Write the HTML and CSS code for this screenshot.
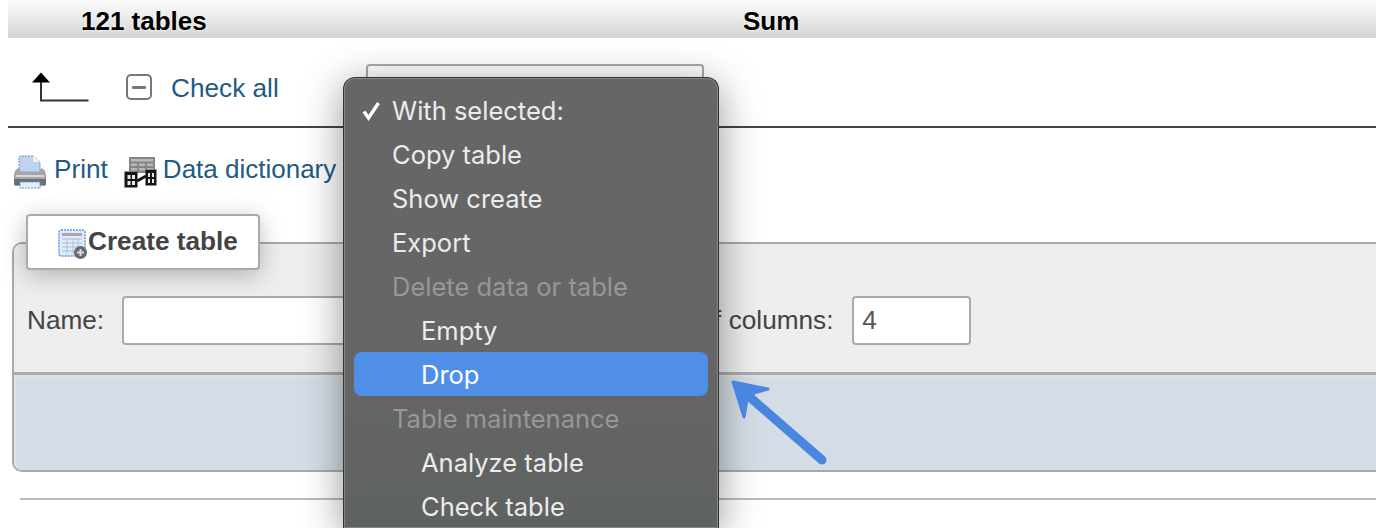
FILE: index.html
```html
<!DOCTYPE html>
<html lang="en">
<head>
<meta charset="utf-8">
<title>Tables</title>
<link rel="stylesheet" href="styles.css">
</head>
<body>
<div class="page">
  <div class="sumbar">
    <div class="sum-count">121 tables</div>
    <div class="sum-label">Sum</div>
  </div>
  <div class="checkrow">
    <svg class="up-arrow" width="59" height="32" viewBox="0 0 59 32"><path d="M10 10V29.500H57.500" fill="none" stroke="#333" stroke-width="2"/><path d="M1 11.500L10 1.500 19 11.500Z" fill="#000"/></svg>
    <span class="checkbox"><span class="dash"></span></span>
    <a class="link checkall">Check all</a>
    <div class="selectbox"></div>
  </div>
  <div class="printrow">
    <a class="link item">
      <svg width="34" height="34" viewBox="0 0 34 34"><path d="M6 17V2.500Q6 1 8 1H20L27 7V17Z" fill="#bfd3ee" stroke="#5f93dc" stroke-dasharray="2 1"/><path d="M20 1V7H27Z" fill="#eef3fa"/><path d="M1 29V21Q1 14 6 13L8 17H26L28 13Q33 14 33 21V29Q33 30.500 31 30.500H3Q1 30.500 1 29Z" fill="#a6a6a6"/><path d="M1 24H33V29Q33 30.500 31 30.500H3Q1 30.500 1 29Z" fill="#6e6e6e"/><path d="M3 20H31V22H3Z" fill="#d9d9d9"/><path d="M7 27H27V33H7Z" fill="#e6eef8" stroke="#5f93dc" stroke-dasharray="2 1"/></svg>
      Print
    </a>
    <a class="link item dict">
      <svg width="33" height="32" viewBox="0 0 33 32"><path d="M5 1H31V17H5Z" fill="#858585"/><path d="M7 3H29V5.500H7ZM7 7.500H13V10H7ZM15 7.500H21V10H15ZM23 7.500H29V10H23ZM7 12H13V14.500H7ZM15 12H21V14.500H15ZM23 12H29V14.500H23Z" fill="#b8b8b8"/><path d="M.5 15.500H13.500V31.500H.5ZM21.500 13.500H32.500V29.500H21.500Z" fill="#151515"/><path d="M.5 15.500H13.500M21.500 13.500H32.500" stroke="#7fa8e0" stroke-dasharray="2 1"/><path d="M13 25L22 20" stroke="#151515" stroke-width="3"/><path d="M3.500 19H6.500V23H3.500ZM8 19H11V23H8ZM3.500 25H6.500V29H3.500ZM8 25H11V29H8ZM24 17H26V21H24ZM28 17H30V21H28ZM24 23H26V27H24ZM28 23H30V27H28Z" fill="#e8e8e8"/></svg>
      Data dictionary
    </a>
  </div>
  <div class="fieldset">
    <div class="legend">
      <svg width="30" height="30" viewBox="0 0 30 30"><rect x="1" y="1" width="26" height="26" rx="2" fill="#e3ebf6" stroke="#5f98ea" stroke-width="1.500" stroke-dasharray="2 1"/><path d="M4 4H24V7H4Z" fill="#a9a9a9"/><path d="M4 10H24M4 14H24M4 18H24M4 22H24M9 9V25M15 9V25M20 9V25" stroke="#a8bfdc" fill="none"/><circle cx="22.500" cy="23.500" r="6.500" fill="#6a6a6a"/><path d="M22.500 20V27M19 23.500H26" stroke="#ddd" stroke-width="2"/></svg>
      <span>Create table</span>
    </div>
    <div class="fieldset-body">
      <label class="fieldlabel">Name:</label>
      <div class="textinput nameinput"></div>
      <label class="fieldlabel columns">Number of columns:</label>
      <div class="textinput colinput">4</div>
    </div>
    <div class="fieldset-foot"></div>
  </div>
  <hr class="rule">
</div>

<div class="menu">
  <div class="mi check"><svg class="tick" width="22" height="20" viewBox="0 0 22 20"><path d="M3 10.500L7.500 17 17.500 2" fill="none" stroke="#fff" stroke-width="3.400"/></svg>With selected:</div>
  <div class="mi">Copy table</div>
  <div class="mi">Show create</div>
  <div class="mi">Export</div>
  <div class="mi off">Delete data or table</div>
  <div class="mi sub">Empty</div>
  <div class="mi sub hot">Drop</div>
  <div class="mi off">Table maintenance</div>
  <div class="mi sub">Analyze table</div>
  <div class="mi sub">Check table</div>
</div>

<svg class="pointer" width="100" height="90" viewBox="0 0 100 90"><path d="M92 82L14 14" stroke="#4a86e0" stroke-width="9" stroke-linecap="round"/><path d="M3 4L38 11 24 15 17 22 14 39Z" fill="#4a86e0" stroke="#4a86e0" stroke-width="3" stroke-linejoin="round"/></svg>
</body>
</html>
```
FILE: styles.css
```css
* { box-sizing: border-box; }
html, body { margin: 0; height: 528px; overflow: hidden; background: #fff; }
body { position: relative; font-family: "Liberation Sans", Arial, sans-serif; font-size: 26.2px; color: #444; }
.page { padding-left: 8px; width: 1376px; height: 528px; overflow: hidden; }
.sumbar { height: 38px; padding-top: 5px; display: flex; align-items: center; background: linear-gradient(#fcfcfc, #d4d4d4); font-weight: bold; font-size: 26px; color: #000; text-shadow: 0 0 3px #fff; }
.sum-count { margin-left: 73px; width: 662px; }
.link { color: #235a81; }
.checkrow { height: 90px; border-bottom: 2px solid #444; position: relative; }
.up-arrow { position: absolute; left: 23px; top: 33px; }
.checkbox { position: absolute; left: 118px; top: 36px; width: 26px; height: 26px; border: 2px solid #777; border-radius: 5px; display: flex; align-items: center; justify-content: center; }
.dash { width: 14px; height: 3px; background: #777; border-radius: 1px; }
.checkall { position: absolute; left: 163px; top: 35px; line-height: 30px; }
.selectbox { position: absolute; left: 358px; top: 26px; width: 338px; height: 48px; border: 2px solid #a9a9a9; border-radius: 4px; }
.printrow { display: flex; align-items: center; height: 85px; padding: 0 0 3px 5px; }
.item { display: flex; align-items: center; gap: 7px; }
.item svg { flex: none; margin-top: 5px; }
.dict { margin-left: 16px; gap: 6px; font-size: 26px; }
.fieldset { margin: 29px 0 0 4px; border: 2px solid #aaa; border-right: 0; border-radius: 10px 0 0 10px; height: 230px; position: relative; }
.legend { position: absolute; left: 12px; top: -30px; width: 234px; height: 56px; background: #fff; border: 2px solid #aaa; border-radius: 4px; display: flex; align-items: center; padding: 0 0 2px 30px; font-weight: bold; box-shadow: 0 5px 24px rgba(0,0,0,.26); }
.legend svg { flex: none; margin-top: 6px; }
.fieldset-body { height: 128px; background: #eee; display: flex; align-items: flex-start; padding: 52px 0 0 13px; border-radius: 8px 0 0 0; }
.fieldlabel { line-height: 49px; }
.textinput { height: 49px; background: #fff; border: 2px solid #aaa; border-radius: 4px; line-height: 45px; padding-left: 8px; color: #555; }
.nameinput { width: 400px; margin-left: 18px; }
.columns { margin-left: 77px; width: 228px; white-space: nowrap; }
.colinput { width: 119px; margin-left: 25px; }
.fieldset-foot { height: 98px; background: #d4dde6; border-top: 3px solid #aaa; border-radius: 0 0 0 8px; box-shadow: inset 2px 2px 0 #dde2e7; }
.rule { margin: 26px 0 0 12px; border: 0; height: 2px; background: #bbb; }
.menu { position: absolute; left: 343px; top: 77px; width: 376px; height: 451px; padding: 10px 10px 0; background: linear-gradient(#666 60%, #5f6262); border: 1px solid #333; border-bottom: 0; border-radius: 12px 12px 0 0; box-shadow: inset 0 0 0 1px #858585, 0 8px 40px rgba(0,0,0,.42); font-family: Inter, "Liberation Sans", sans-serif; font-size: 25.5px; color: #ececec; }
.mi { height: 44px; line-height: 46px; padding-left: 38px; position: relative; border-radius: 8px; }
.sub { padding-left: 67px; }
.off { color: #979797; }
.hot { background: #4f8fe8; color: #fff; }
.tick { position: absolute; left: 7px; top: 13px; }
.pointer { position: absolute; left: 730px; top: 378px; }
```
